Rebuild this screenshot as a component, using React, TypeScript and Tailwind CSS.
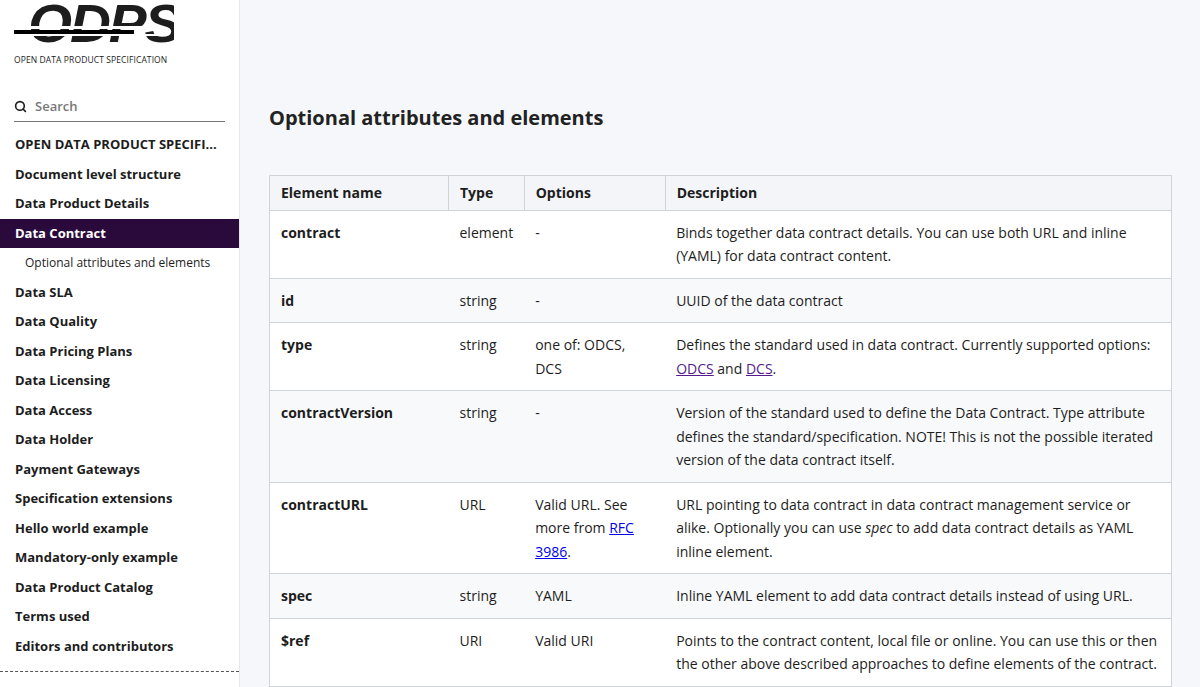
import { Search } from "lucide-react";

const nav = [
  "OPEN DATA PRODUCT SPECIFI...",
  "Document level structure",
  "Data Product Details",
  "Data Contract",
  "Optional attributes and elements",
  "Data SLA",
  "Data Quality",
  "Data Pricing Plans",
  "Data Licensing",
  "Data Access",
  "Data Holder",
  "Payment Gateways",
  "Specification extensions",
  "Hello world example",
  "Mandatory-only example",
  "Data Product Catalog",
  "Terms used",
  "Editors and contributors",
];

const A = ({ children }: { children: React.ReactNode }) => (
  <a className="text-[#551a8b] underline">{children}</a>
);
const B = ({ children }: { children: React.ReactNode }) => (
  <a className="text-[#0000ee] underline">{children}</a>
);

const rows: [string, string, React.ReactNode, React.ReactNode][] = [
  ["contract", "element", "-", "Binds together data contract details. You can use both URL and inline (YAML) for data contract content."],
  ["id", "string", "-", "UUID of the data contract"],
  [
    "type",
    "string",
    "one of: ODCS, DCS",
    <>Defines the standard used in data contract. Currently supported options: <A>ODCS</A> and <A>DCS</A>.</>,
  ],
  ["contractVersion", "string", "-", "Version of the standard used to define the Data Contract. Type attribute defines the standard/specification. NOTE! This is not the possible iterated version of the data contract itself."],
  [
    "contractURL",
    "URL",
    <>Valid URL. See more from <B>RFC 3986</B>.</>,
    <>URL pointing to data contract in data contract management service or alike. Optionally you can use <i>spec</i> to add data contract details as YAML inline element.</>,
  ],
  ["spec", "string", "YAML", "Inline YAML element to add data contract details instead of using URL."],
  ["$ref", "URI", "Valid URI", "Points to the contract content, local file or online. You can use this or then the other above described approaches to define elements of the contract."],
];

export default function App() {
  return (
    <div className="flex h-[687px] overflow-hidden text-[#1d1d1d]" style={{ fontFamily: '"Open Sans", sans-serif' }}>
      <aside className="w-[240px] shrink-0 bg-white border-r border-[#e5e7eb] flex flex-col">
        <div className="px-[14px] pt-[2px]">
          {/* ODPS logo */}
          <div className="relative h-[46px] w-[160px] overflow-hidden">
            <span className="absolute left-[14px] top-[-6px] text-[54px] font-black italic tracking-[-2px] leading-none scale-x-[1.05] origin-left" style={{ fontFamily: '"Liberation Sans", sans-serif' }}>ODPS</span>
            <div className="absolute left-[0px] top-[24px] h-[3px] w-[150px] bg-white" />
            <div className="absolute left-[0px] top-[28px] h-[4px] w-[120px] bg-black" />
            <div className="absolute left-[0px] top-[32px] h-[2px] w-[150px] bg-white" />
          </div>
          <div className="text-[8.5px] mt-[6px] tracking-[0.1px]">OPEN DATA PRODUCT SPECIFICATION</div>
        </div>
        <div className="mx-[14px] mt-[30px] flex items-center gap-[8px] border-b border-[#777] pb-[5px]">
          <Search className="w-[13px] h-[13px]" strokeWidth={3} />
          <span className="text-[13px] font-semibold text-[#777]">Search</span>
        </div>
        <nav className="mt-[8px]">
          {nav.map((n) => {
            const active = n === "Data Contract";
            const sub = n.startsWith("Optional");
            return (
              <div
                key={n}
                className={`h-[29.5px] flex items-center ${sub ? "pl-[25px] text-[12px] font-normal" : "pl-[15px] text-[13px] font-bold"} ${active ? "bg-[#2a0a3a] text-white" : ""}`}
              >
                {n}
              </div>
            );
          })}
        </nav>
        <div className="mt-[10px] border-t border-dashed border-[#555]" />
      </aside>
      <main className="flex-1 bg-[#f5f7fa] pl-[29px] pr-[28px]">
        <h1 className="mt-[103px] text-[20px] font-bold text-[#222]">Optional attributes and elements</h1>
        <table className="mt-[42px] w-[903px] border-collapse text-[14px] leading-[23.5px] bg-white">
          <thead>
            <tr className="bg-[#f3f5f8] text-left">
              <th className="w-[179px] border border-[#d0d4d9] px-[11px] py-[5px] font-bold">Element name</th>
              <th className="w-[72px] border border-[#d0d4d9] px-[11px] py-[5px] font-bold">Type</th>
              <th className="w-[141px] border border-[#d0d4d9] px-[11px] py-[5px] font-bold">Options</th>
              <th className="border border-[#d0d4d9] px-[11px] py-[5px] font-bold">Description</th>
            </tr>
          </thead>
          <tbody>
            {rows.map(([a, b, c, d], i) => (
              <tr key={i} className={`align-top border-b border-[#d0d4d9] ${i % 2 ? "bg-[#f8f9fb]" : "bg-white"}`}>
                <td className="border-l border-[#d0d4d9] px-[11px] pt-[10px] pb-[10px] font-bold">{a}</td>
                <td className="px-[11px] pt-[10px] pb-[10px]">{b}</td>
                <td className="px-[11px] pt-[10px] pb-[10px]">{c}</td>
                <td className="border-r border-[#d0d4d9] px-[11px] pt-[10px] pb-[10px]">{d}</td>
              </tr>
            ))}
          </tbody>
        </table>
      </main>
    </div>
  );
}
